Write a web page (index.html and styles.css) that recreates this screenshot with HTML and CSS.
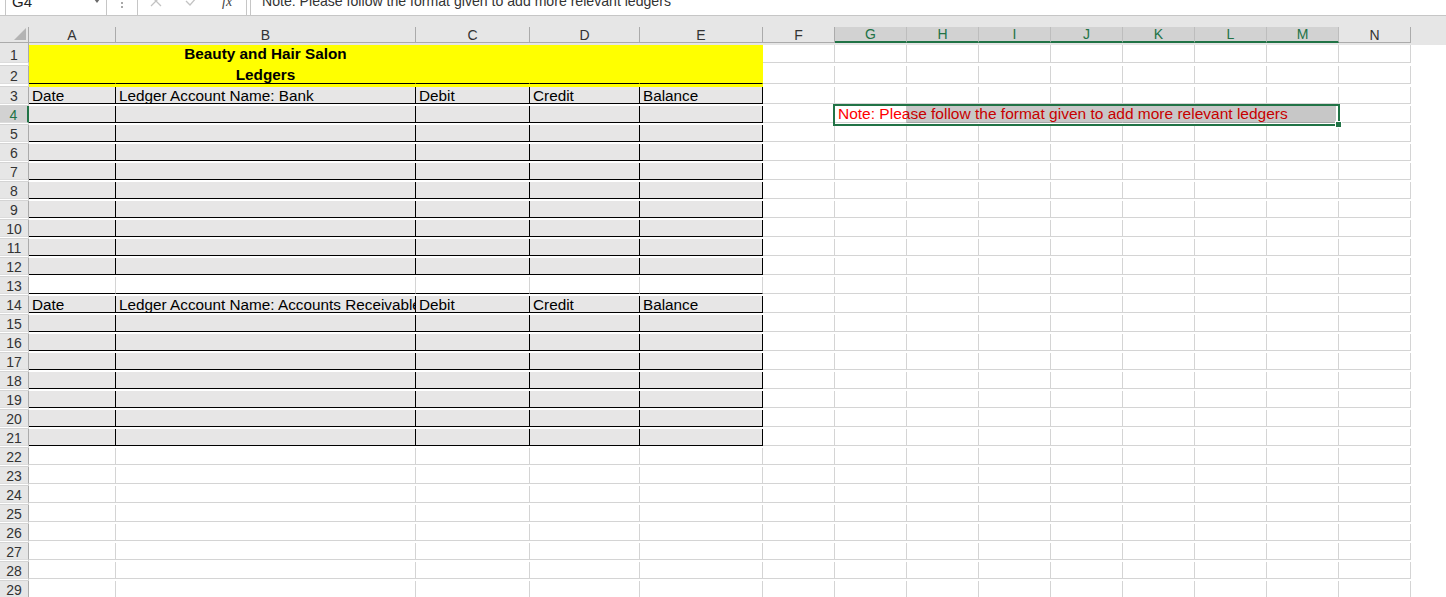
FILE: index.html
```html
<!DOCTYPE html>
<html lang="en">
<head>
<meta charset="utf-8">
<title>Ledgers</title>
<link rel="stylesheet" href="styles.css">
</head>
<body>
<div class="fbar">
  <div class="namebox"><span class="nb-text">G4</span><span class="caret"></span></div>
  <div class="dots"><i></i><i></i><i></i></div>
  <div class="fbtns">
    <svg class="ic-x" width="12" height="12" viewBox="0 0 12 12"><path d="M1 1 L11 11 M11 1 L1 11" stroke="#c3c3c3" stroke-width="1.3" fill="none"/></svg>
    <svg class="ic-ok" width="13" height="10" viewBox="0 0 13 10"><path d="M1 5 L5 9 L12 1" stroke="#c3c3c3" stroke-width="1.3" fill="none"/></svg>
    <span class="fx">fx</span>
  </div>
  <div class="formula"><span>Note: Please follow the format given to add more relevant ledgers</span></div>
</div>
<div class="band"></div>
<div class="sheet">
  <div class="colhead">
    <span class="corner"><i></i></span><span>A</span><span>B</span><span>C</span><span>D</span><span>E</span><span>F</span><span class="sel">G</span><span class="sel">H</span><span class="sel">I</span><span class="sel">J</span><span class="sel">K</span><span class="sel">L</span><span class="sel">M</span><span>N</span><span>O</span>
  </div>
  <div class="row ttl"><span class="rh">1</span><span></span><span class="t">Beauty and Hair Salon</span><span></span><span></span><span></span><span></span><span></span><span></span><span></span><span></span><span></span><span></span><span></span><span></span><span></span></div>
  <div class="row ttl t2"><span class="rh">2</span><span></span><span class="t">Ledgers</span><span></span><span></span><span></span><span></span><span></span><span></span><span></span><span></span><span></span><span></span><span></span><span></span><span></span></div>
  <div class="row lg"><span class="rh">3</span><span>Date</span><span>Ledger Account Name: Bank</span><span>Debit</span><span>Credit</span><span>Balance</span><span></span><span></span><span></span><span></span><span></span><span></span><span></span><span></span><span></span><span></span></div>
  <div class="row lg r4"><span class="rh on">4</span><span></span><span></span><span></span><span></span><span></span><span></span><span class="note">Note: Please follow the format given to add more relevant ledgers</span><span></span><span></span><span></span><span></span><span></span><span></span><span></span><span></span></div>
  <div class="row lg"><span class="rh">5</span><span></span><span></span><span></span><span></span><span></span><span></span><span></span><span></span><span></span><span></span><span></span><span></span><span></span><span></span><span></span></div>
  <div class="row lg"><span class="rh">6</span><span></span><span></span><span></span><span></span><span></span><span></span><span></span><span></span><span></span><span></span><span></span><span></span><span></span><span></span><span></span></div>
  <div class="row lg"><span class="rh">7</span><span></span><span></span><span></span><span></span><span></span><span></span><span></span><span></span><span></span><span></span><span></span><span></span><span></span><span></span><span></span></div>
  <div class="row lg"><span class="rh">8</span><span></span><span></span><span></span><span></span><span></span><span></span><span></span><span></span><span></span><span></span><span></span><span></span><span></span><span></span><span></span></div>
  <div class="row lg"><span class="rh">9</span><span></span><span></span><span></span><span></span><span></span><span></span><span></span><span></span><span></span><span></span><span></span><span></span><span></span><span></span><span></span></div>
  <div class="row lg"><span class="rh">10</span><span></span><span></span><span></span><span></span><span></span><span></span><span></span><span></span><span></span><span></span><span></span><span></span><span></span><span></span><span></span></div>
  <div class="row lg"><span class="rh">11</span><span></span><span></span><span></span><span></span><span></span><span></span><span></span><span></span><span></span><span></span><span></span><span></span><span></span><span></span><span></span></div>
  <div class="row lg"><span class="rh">12</span><span></span><span></span><span></span><span></span><span></span><span></span><span></span><span></span><span></span><span></span><span></span><span></span><span></span><span></span><span></span></div>
  <div class="row tb"><span class="rh">13</span><span></span><span></span><span></span><span></span><span></span><span></span><span></span><span></span><span></span><span></span><span></span><span></span><span></span><span></span><span></span></div>
  <div class="row lg"><span class="rh">14</span><span>Date</span><span>Ledger Account Name: Accounts Receivable</span><span>Debit</span><span>Credit</span><span>Balance</span><span></span><span></span><span></span><span></span><span></span><span></span><span></span><span></span><span></span><span></span></div>
  <div class="row lg"><span class="rh">15</span><span></span><span></span><span></span><span></span><span></span><span></span><span></span><span></span><span></span><span></span><span></span><span></span><span></span><span></span><span></span></div>
  <div class="row lg"><span class="rh">16</span><span></span><span></span><span></span><span></span><span></span><span></span><span></span><span></span><span></span><span></span><span></span><span></span><span></span><span></span><span></span></div>
  <div class="row lg"><span class="rh">17</span><span></span><span></span><span></span><span></span><span></span><span></span><span></span><span></span><span></span><span></span><span></span><span></span><span></span><span></span><span></span></div>
  <div class="row lg"><span class="rh">18</span><span></span><span></span><span></span><span></span><span></span><span></span><span></span><span></span><span></span><span></span><span></span><span></span><span></span><span></span><span></span></div>
  <div class="row lg"><span class="rh">19</span><span></span><span></span><span></span><span></span><span></span><span></span><span></span><span></span><span></span><span></span><span></span><span></span><span></span><span></span><span></span></div>
  <div class="row lg"><span class="rh">20</span><span></span><span></span><span></span><span></span><span></span><span></span><span></span><span></span><span></span><span></span><span></span><span></span><span></span><span></span><span></span></div>
  <div class="row lg"><span class="rh">21</span><span></span><span></span><span></span><span></span><span></span><span></span><span></span><span></span><span></span><span></span><span></span><span></span><span></span><span></span><span></span></div>
  <div class="row"><span class="rh">22</span><span></span><span></span><span></span><span></span><span></span><span></span><span></span><span></span><span></span><span></span><span></span><span></span><span></span><span></span><span></span></div>
  <div class="row"><span class="rh">23</span><span></span><span></span><span></span><span></span><span></span><span></span><span></span><span></span><span></span><span></span><span></span><span></span><span></span><span></span><span></span></div>
  <div class="row"><span class="rh">24</span><span></span><span></span><span></span><span></span><span></span><span></span><span></span><span></span><span></span><span></span><span></span><span></span><span></span><span></span><span></span></div>
  <div class="row"><span class="rh">25</span><span></span><span></span><span></span><span></span><span></span><span></span><span></span><span></span><span></span><span></span><span></span><span></span><span></span><span></span><span></span></div>
  <div class="row"><span class="rh">26</span><span></span><span></span><span></span><span></span><span></span><span></span><span></span><span></span><span></span><span></span><span></span><span></span><span></span><span></span><span></span></div>
  <div class="row"><span class="rh">27</span><span></span><span></span><span></span><span></span><span></span><span></span><span></span><span></span><span></span><span></span><span></span><span></span><span></span><span></span><span></span></div>
  <div class="row"><span class="rh">28</span><span></span><span></span><span></span><span></span><span></span><span></span><span></span><span></span><span></span><span></span><span></span><span></span><span></span><span></span><span></span></div>
  <div class="row"><span class="rh">29</span><span></span><span></span><span></span><span></span><span></span><span></span><span></span><span></span><span></span><span></span><span></span><span></span><span></span><span></span><span></span></div>
  <div class="selbox"><div class="tint"></div><div class="handle"></div></div>
</div>
</body>
</html>
```

FILE: styles.css
```css
* { box-sizing: border-box; }
html, body { margin: 0; padding: 0; background: #fff; overflow: hidden; }
body {
  width: 1446px;
  height: 597px;
  font-family: "Liberation Sans", Arial, sans-serif;
  color: #000;
}

/* formula bar */
.fbar {
  height: 16px;
  display: flex;
  align-items: flex-end;
  padding-left: 5px;
  background: #fff;
  border-bottom: 1px solid #c6c6c6;
  overflow: hidden;
}
.namebox {
  width: 102px;
  height: 30px;
  flex: none;
  border: 1px solid #c6c6c6;
  border-bottom: 0;
  display: flex;
  align-items: flex-end;
  padding: 0 6px;
  background: #fff;
}
.nb-text {
  font-size: 15px;
  line-height: 15px;
  margin-bottom: 6px;
  color: #222;
}
.caret {
  margin-left: auto;
  margin-bottom: 12px;
  width: 0;
  height: 0;
  border-left: 3.5px solid transparent;
  border-right: 3.5px solid transparent;
  border-top: 4px solid #6a6a6a;
}
.dots {
  flex: none;
  margin-left: 14px;
  margin-bottom: 7px;
  display: flex;
  flex-direction: column;
  gap: 2px;
}
.dots i {
  display: block;
  width: 2px;
  height: 2px;
  background: #a8a8a8;
}
.fbtns {
  flex: none;
  margin-left: 14px;
  width: 110px;
  height: 30px;
  border: 1px solid #c6c6c6;
  border-bottom: 0;
  display: flex;
  align-items: flex-end;
  padding-bottom: 8px;
  background: #fff;
}
.ic-x { margin-left: 12px; flex: none; }
.ic-ok { margin-left: 23px; flex: none; margin-bottom: 1px; }
.fx {
  margin-left: 24px;
  font-family: "Liberation Serif", "Times New Roman", serif;
  font-style: italic;
  font-size: 14px;
  line-height: 12px;
  color: #444;
  margin-bottom: -1px;
}
.formula {
  flex: 1;
  margin-left: 3px;
  height: 30px;
  border: 1px solid #c6c6c6;
  border-bottom: 0;
  border-right: 0;
  display: flex;
  align-items: flex-end;
  padding: 0 0 6px 11px;
  background: #fff;
  white-space: nowrap;
}
.formula span {
  font-size: 14.1px;
  line-height: 15px;
  color: #333;
}

.band {
  height: 11px;
  background: #e6e6e6;
}

/* sheet */
.sheet { position: relative; }
.colhead, .row {
  display: grid;
  grid-template-columns: 29px 87px 300px 114px 110px 123px repeat(9, 72px);
}
.colhead {
  height: 18px;
  background: #e6e6e6;
}
.colhead span {
  display: flex;
  justify-content: center;
  align-items: flex-end;
  border-right: 1px solid #ababab;
  border-bottom: 1px solid #ababab;
  font-size: 14px;
  line-height: 14px;
  color: #333;
}
.colhead .sel {
  background: #d2d2d2;
  color: #217346;
  border-right-color: #bdbdbd;
  border-bottom: 2px solid #217346;
}
.colhead .corner {
  justify-content: flex-end;
  padding: 0 2px 2px 0;
}
.corner i {
  display: block;
  width: 12px;
  height: 12px;
  background: #b4b4b4;
  clip-path: polygon(100% 0, 100% 100%, 0 100%);
}

.row { height: 19px; }
.row.ttl { height: 21px; }
.row span {
  display: flex;
  align-items: flex-end;
  padding: 0 3px;
  border-right: 1px solid #d4d4d4;
  border-bottom: 1px solid #d4d4d4;
  font-size: 15.3px;
  line-height: 14px;
  white-space: nowrap;
  overflow: hidden;
}
.row .rh {
  justify-content: center;
  background: #e6e6e6;
  border-right-color: #ababab;
  border-bottom-color: #dcdcdc;
  font-size: 14px;
  line-height: 14px;
  color: #333;
  padding: 0;
}
.row .rh.on {
  background: #d2d2d2;
  color: #217346;
  border-right: 2px solid #217346;
}

/* title block */
.ttl {
  background: linear-gradient(to right, transparent 29px, #ffff00 29px, #ffff00 763px, transparent 763px);
}
.ttl > span:nth-child(n+2):nth-child(-n+6) {
  background: #ffff00;
  border-color: #ffff00;
}
.ttl.t2 > span:nth-child(n+2):nth-child(-n+6) { border-bottom-color: #000; }
.ttl .t {
  justify-content: center;
  font-weight: bold;
  overflow: visible;
  padding-bottom: 1px;
}

/* ledger block */
.lg > span:nth-child(n+2):nth-child(-n+6) {
  background: #e7e6e6;
  border-color: #000;
}
.tb > span:nth-child(n+2):nth-child(-n+6) { border-bottom-color: #000; }

/* note row */
.r4 > span:nth-child(n+8):nth-child(-n+13) { border-right-color: transparent; }
.row .note {
  overflow: visible;
  color: #ff0000;
  font-size: 15.5px;
  padding-bottom: 1px;
}

/* selection */
.selbox {
  position: absolute;
  left: 833px;
  top: 77px;
  width: 507px;
  height: 22px;
  border: 2px solid #217346;
}
.tint {
  position: absolute;
  left: 71px;
  right: 2px;
  top: 0;
  bottom: 1px;
  background: rgba(0, 0, 0, 0.22);
}
.handle {
  position: absolute;
  right: -4px;
  bottom: -4px;
  width: 7px;
  height: 7px;
  background: #217346;
  border: 1px solid #fff;
}
```
